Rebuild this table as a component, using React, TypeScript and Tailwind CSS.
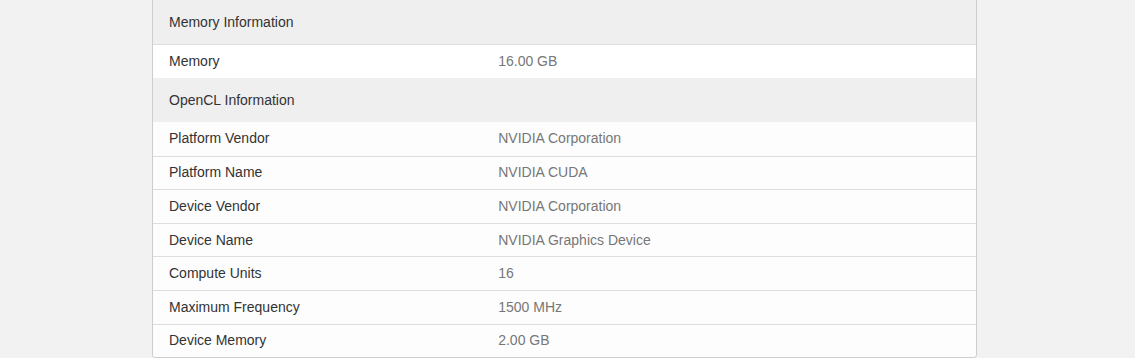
import React from 'react';

type Row = { label: string; value?: string; header?: boolean };

const rows: Row[] = [
  { label: 'Memory Information', header: true },
  { label: 'Memory', value: '16.00 GB' },
  { label: 'OpenCL Information', header: true },
  { label: 'Platform Vendor', value: 'NVIDIA Corporation' },
  { label: 'Platform Name', value: 'NVIDIA CUDA' },
  { label: 'Device Vendor', value: 'NVIDIA Corporation' },
  { label: 'Device Name', value: 'NVIDIA Graphics Device' },
  { label: 'Compute Units', value: '16' },
  { label: 'Maximum Frequency', value: '1500 MHz' },
  { label: 'Device Memory', value: '2.00 GB' },
];

const App = () => {
  return (
    <div className="min-h-[358px] bg-[#f2f2f2] font-['Liberation_Sans',Arial,sans-serif] text-[14px]">
      <div className="ml-[152px] w-[825px] border-x border-b border-[#cdcdcd] rounded-b-[4px] overflow-hidden bg-white">
        {rows.map((row, i) => {
          if (row.header) {
            return (
              <div key={i} className="h-[44px] flex items-center px-4 bg-[#efefef] text-[#333]">
                {row.label}
              </div>
            );
          }
          const afterHeader = rows[i - 1]?.header;
          // the memory row keeps its rule under the first heading, the opencl block starts flush
          const cls =
            i === 1
              ? 'h-[34px] border-t border-[#dddddd] bg-white'
              : afterHeader
              ? 'h-[33.6px] bg-[#fdfdfd]'
              : 'h-[33.6px] border-t border-[#dddddd] bg-[#fdfdfd]';
          return (
            <div key={i} className={`flex items-center ${cls}`}>
              <div className="w-[40%] px-4 text-[#333]">{row.label}</div>
              <div className="flex-1 px-4 text-[#777]">{row.value}</div>
            </div>
          );
        })}
      </div>
    </div>
  );
};

export default App;
